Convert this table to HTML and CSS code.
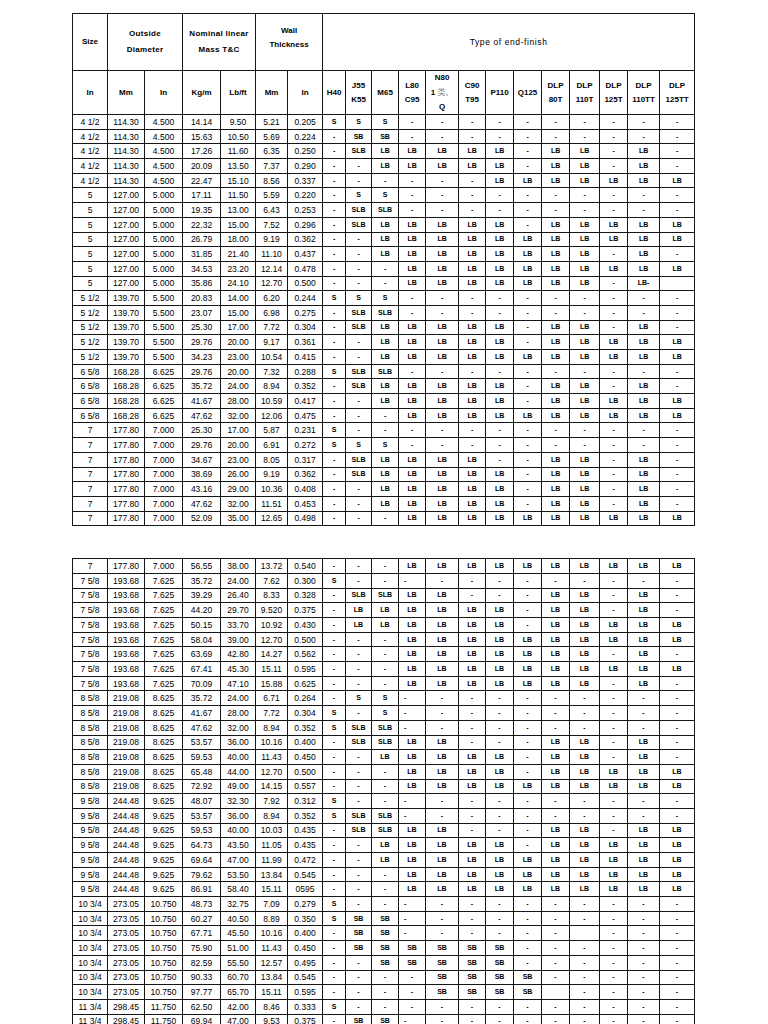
FILE: index.html
```html
<!DOCTYPE html>
<html>
<head>
<meta charset="utf-8">
<link rel="stylesheet" href="styles.css">
</head>
<body>
<div class="page">
<table class="spec">
<colgroup><col class="c35"><col class="c37"><col class="c38"><col class="c38"><col class="c35"><col class="c32"><col class="c35"><col class="c23"><col class="c26"><col class="c27"><col class="c27"><col class="c33"><col class="c27"><col class="c28"><col class="c28"><col class="c28"><col class="c30"><col class="c28"><col class="c32"><col class="c35"></colgroup>
<thead>
<tr class="h1"><th>Size</th><th colspan="2" class="sp">Outside<br>Diameter</th><th colspan="2" class="sp">Nominal linear<br>Mass T&amp;C</th><th colspan="2" class="wall">Wall<br>Thickness</th><th colspan="13" class="type">Type of end-finish</th></tr>
<tr class="h2"><th>In</th><th>Mm</th><th>In</th><th>Kg/m</th><th>Lb/ft</th><th>Mm</th><th>In</th><th>H40</th><th>J55<br>K55</th><th>M65</th><th>L80<br>C95</th><th>N80<br>1 <span class="cjk">类、</span><br>Q</th><th>C90<br>T95</th><th>P110</th><th>Q125</th><th>DLP<br>80T</th><th>DLP<br>110T</th><th>DLP<br>125T</th><th>DLP<br>110TT</th><th>DLP<br>125TT</th></tr>
</thead>
<tbody>
<tr><td>4 1/2</td><td>114.30</td><td>4.500</td><td>14.14</td><td>9.50</td><td>5.21</td><td>0.205</td><td>S</td><td>S</td><td>S</td><td>-</td><td>-</td><td>-</td><td>-</td><td>-</td><td>-</td><td>-</td><td>-</td><td>-</td><td>-</td></tr>
<tr><td>4 1/2</td><td>114.30</td><td>4.500</td><td>15.63</td><td>10.50</td><td>5.69</td><td>0.224</td><td>-</td><td>SB</td><td>SB</td><td>-</td><td>-</td><td>-</td><td>-</td><td>-</td><td>-</td><td>-</td><td>-</td><td>-</td><td>-</td></tr>
<tr><td>4 1/2</td><td>114.30</td><td>4.500</td><td>17.26</td><td>11.60</td><td>6.35</td><td>0.250</td><td>-</td><td>SLB</td><td>LB</td><td>LB</td><td>LB</td><td>LB</td><td>LB</td><td>-</td><td>LB</td><td>LB</td><td>-</td><td>LB</td><td>-</td></tr>
<tr><td>4 1/2</td><td>114.30</td><td>4.500</td><td>20.09</td><td>13.50</td><td>7.37</td><td>0.290</td><td>-</td><td>-</td><td>LB</td><td>LB</td><td>LB</td><td>LB</td><td>LB</td><td>-</td><td>LB</td><td>LB</td><td>-</td><td>LB</td><td>-</td></tr>
<tr><td>4 1/2</td><td>114.30</td><td>4.500</td><td>22.47</td><td>15.10</td><td>8.56</td><td>0.337</td><td>-</td><td>-</td><td>-</td><td>-</td><td>-</td><td>-</td><td>LB</td><td>LB</td><td>LB</td><td>LB</td><td>LB</td><td>LB</td><td>LB</td></tr>
<tr><td>5</td><td>127.00</td><td>5.000</td><td>17.11</td><td>11.50</td><td>5.59</td><td>0.220</td><td>-</td><td>S</td><td>S</td><td>-</td><td>-</td><td>-</td><td>-</td><td>-</td><td>-</td><td>-</td><td>-</td><td>-</td><td>-</td></tr>
<tr><td>5</td><td>127.00</td><td>5.000</td><td>19.35</td><td>13.00</td><td>6.43</td><td>0.253</td><td>-</td><td>SLB</td><td>SLB</td><td>-</td><td>-</td><td>-</td><td>-</td><td>-</td><td>-</td><td>-</td><td>-</td><td>-</td><td>-</td></tr>
<tr><td>5</td><td>127.00</td><td>5.000</td><td>22.32</td><td>15.00</td><td>7.52</td><td>0.296</td><td>-</td><td>SLB</td><td>LB</td><td>LB</td><td>LB</td><td>LB</td><td>LB</td><td>-</td><td>LB</td><td>LB</td><td>LB</td><td>LB</td><td>LB</td></tr>
<tr><td>5</td><td>127.00</td><td>5.000</td><td>26.79</td><td>18.00</td><td>9.19</td><td>0.362</td><td>-</td><td>-</td><td>LB</td><td>LB</td><td>LB</td><td>LB</td><td>LB</td><td>LB</td><td>LB</td><td>LB</td><td>LB</td><td>LB</td><td>LB</td></tr>
<tr><td>5</td><td>127.00</td><td>5.000</td><td>31.85</td><td>21.40</td><td>11.10</td><td>0.437</td><td>-</td><td>-</td><td>LB</td><td>LB</td><td>LB</td><td>LB</td><td>LB</td><td>LB</td><td>LB</td><td>LB</td><td>-</td><td>LB</td><td>-</td></tr>
<tr><td>5</td><td>127.00</td><td>5.000</td><td>34.53</td><td>23.20</td><td>12.14</td><td>0.478</td><td>-</td><td>-</td><td>-</td><td>LB</td><td>LB</td><td>LB</td><td>LB</td><td>LB</td><td>LB</td><td>LB</td><td>LB</td><td>LB</td><td>LB</td></tr>
<tr><td>5</td><td>127.00</td><td>5.000</td><td>35.86</td><td>24.10</td><td>12.70</td><td>0.500</td><td>-</td><td>-</td><td>-</td><td>LB</td><td>LB</td><td>LB</td><td>LB</td><td>LB</td><td>LB</td><td>LB</td><td>-</td><td>LB-</td><td></td></tr>
<tr><td>5 1/2</td><td>139.70</td><td>5.500</td><td>20.83</td><td>14.00</td><td>6.20</td><td>0.244</td><td>S</td><td>S</td><td>S</td><td>-</td><td>-</td><td>-</td><td>-</td><td>-</td><td>-</td><td>-</td><td>-</td><td>-</td><td>-</td></tr>
<tr><td>5 1/2</td><td>139.70</td><td>5.500</td><td>23.07</td><td>15.00</td><td>6.98</td><td>0.275</td><td>-</td><td>SLB</td><td>SLB</td><td>-</td><td>-</td><td>-</td><td>-</td><td>-</td><td>-</td><td>-</td><td>-</td><td>-</td><td>-</td></tr>
<tr><td>5 1/2</td><td>139.70</td><td>5.500</td><td>25.30</td><td>17.00</td><td>7.72</td><td>0.304</td><td>-</td><td>SLB</td><td>LB</td><td>LB</td><td>LB</td><td>LB</td><td>LB</td><td>-</td><td>LB</td><td>LB</td><td>-</td><td>LB</td><td>-</td></tr>
<tr><td>5 1/2</td><td>139.70</td><td>5.500</td><td>29.76</td><td>20.00</td><td>9.17</td><td>0.361</td><td>-</td><td>-</td><td>LB</td><td>LB</td><td>LB</td><td>LB</td><td>LB</td><td>-</td><td>LB</td><td>LB</td><td>LB</td><td>LB</td><td>LB</td></tr>
<tr><td>5 1/2</td><td>139.70</td><td>5.500</td><td>34.23</td><td>23.00</td><td>10.54</td><td>0.415</td><td>-</td><td>-</td><td>LB</td><td>LB</td><td>LB</td><td>LB</td><td>LB</td><td>LB</td><td>LB</td><td>LB</td><td>LB</td><td>LB</td><td>LB</td></tr>
<tr><td>6 5/8</td><td>168.28</td><td>6.625</td><td>29.76</td><td>20.00</td><td>7.32</td><td>0.288</td><td>S</td><td>SLB</td><td>SLB</td><td>-</td><td>-</td><td>-</td><td>-</td><td>-</td><td>-</td><td>-</td><td>-</td><td>-</td><td>-</td></tr>
<tr><td>6 5/8</td><td>168.28</td><td>6.625</td><td>35.72</td><td>24.00</td><td>8.94</td><td>0.352</td><td>-</td><td>SLB</td><td>LB</td><td>LB</td><td>LB</td><td>LB</td><td>LB</td><td>-</td><td>LB</td><td>LB</td><td>-</td><td>LB</td><td>-</td></tr>
<tr><td>6 5/8</td><td>168.28</td><td>6.625</td><td>41.67</td><td>28.00</td><td>10.59</td><td>0.417</td><td>-</td><td>-</td><td>LB</td><td>LB</td><td>LB</td><td>LB</td><td>LB</td><td>-</td><td>LB</td><td>LB</td><td>LB</td><td>LB</td><td>LB</td></tr>
<tr><td>6 5/8</td><td>168.28</td><td>6.625</td><td>47.62</td><td>32.00</td><td>12.06</td><td>0.475</td><td>-</td><td>-</td><td>-</td><td>LB</td><td>LB</td><td>LB</td><td>LB</td><td>LB</td><td>LB</td><td>LB</td><td>LB</td><td>LB</td><td>LB</td></tr>
<tr><td>7</td><td>177.80</td><td>7.000</td><td>25.30</td><td>17.00</td><td>5.87</td><td>0.231</td><td>S</td><td>-</td><td>-</td><td>-</td><td>-</td><td>-</td><td>-</td><td>-</td><td>-</td><td>-</td><td>-</td><td>-</td><td>-</td></tr>
<tr><td>7</td><td>177.80</td><td>7.000</td><td>29.76</td><td>20.00</td><td>6.91</td><td>0.272</td><td>S</td><td>S</td><td>S</td><td>-</td><td>-</td><td>-</td><td>-</td><td>-</td><td>-</td><td>-</td><td>-</td><td>-</td><td>-</td></tr>
<tr><td>7</td><td>177.80</td><td>7.000</td><td>34.67</td><td>23.00</td><td>8.05</td><td>0.317</td><td>-</td><td>SLB</td><td>LB</td><td>LB</td><td>LB</td><td>LB</td><td>-</td><td>-</td><td>LB</td><td>LB</td><td>-</td><td>LB</td><td>-</td></tr>
<tr><td>7</td><td>177.80</td><td>7.000</td><td>38.69</td><td>26.00</td><td>9.19</td><td>0.362</td><td>-</td><td>SLB</td><td>LB</td><td>LB</td><td>LB</td><td>LB</td><td>LB</td><td>-</td><td>LB</td><td>LB</td><td>-</td><td>LB</td><td>-</td></tr>
<tr><td>7</td><td>177.80</td><td>7.000</td><td>43.16</td><td>29.00</td><td>10.36</td><td>0.408</td><td>-</td><td>-</td><td>LB</td><td>LB</td><td>LB</td><td>LB</td><td>LB</td><td>-</td><td>LB</td><td>LB</td><td>-</td><td>LB</td><td>-</td></tr>
<tr><td>7</td><td>177.80</td><td>7.000</td><td>47.62</td><td>32.00</td><td>11.51</td><td>0.453</td><td>-</td><td>-</td><td>LB</td><td>LB</td><td>LB</td><td>LB</td><td>LB</td><td>-</td><td>LB</td><td>LB</td><td>-</td><td>LB</td><td>-</td></tr>
<tr><td>7</td><td>177.80</td><td>7.000</td><td>52.09</td><td>35.00</td><td>12.65</td><td>0.498</td><td>-</td><td>-</td><td>-</td><td>LB</td><td>LB</td><td>LB</td><td>LB</td><td>LB</td><td>LB</td><td>LB</td><td>LB</td><td>LB</td><td>LB</td></tr>
</tbody>
</table>

<table class="spec second">
<colgroup><col class="c35"><col class="c37"><col class="c38"><col class="c38"><col class="c35"><col class="c32"><col class="c35"><col class="c23"><col class="c26"><col class="c27"><col class="c27"><col class="c33"><col class="c27"><col class="c28"><col class="c28"><col class="c28"><col class="c30"><col class="c28"><col class="c32"><col class="c35"></colgroup>
<tbody>
<tr><td>7</td><td>177.80</td><td>7.000</td><td>56.55</td><td>38.00</td><td>13.72</td><td>0.540</td><td>-</td><td>-</td><td>-</td><td>LB</td><td>LB</td><td>LB</td><td>LB</td><td>LB</td><td>LB</td><td>LB</td><td>LB</td><td>LB</td><td>LB</td></tr>
<tr><td>7 5/8</td><td>193.68</td><td>7.625</td><td>35.72</td><td>24.00</td><td>7.62</td><td>0.300</td><td>S</td><td>-</td><td>-</td><td class="l">-</td><td>-</td><td>-</td><td>-</td><td>-</td><td>-</td><td>-</td><td>-</td><td>-</td><td>-</td></tr>
<tr><td>7 5/8</td><td>193.68</td><td>7.625</td><td>39.29</td><td>26.40</td><td>8.33</td><td>0.328</td><td>-</td><td>SLB</td><td>SLB</td><td>LB</td><td>LB</td><td>-</td><td>-</td><td>-</td><td>LB</td><td>LB</td><td>-</td><td>LB</td><td>-</td></tr>
<tr><td>7 5/8</td><td>193.68</td><td>7.625</td><td>44.20</td><td>29.70</td><td>9.520</td><td>0.375</td><td>-</td><td>LB</td><td>LB</td><td>LB</td><td>LB</td><td>LB</td><td>LB</td><td>-</td><td>LB</td><td>LB</td><td>-</td><td>LB</td><td>-</td></tr>
<tr><td>7 5/8</td><td>193.68</td><td>7.625</td><td>50.15</td><td>33.70</td><td>10.92</td><td>0.430</td><td>-</td><td>LB</td><td>LB</td><td>LB</td><td>LB</td><td>LB</td><td>LB</td><td>-</td><td>LB</td><td>LB</td><td>LB</td><td>LB</td><td>LB</td></tr>
<tr><td>7 5/8</td><td>193.68</td><td>7.625</td><td>58.04</td><td>39.00</td><td>12.70</td><td>0.500</td><td>-</td><td>-</td><td>-</td><td>LB</td><td>LB</td><td>LB</td><td>LB</td><td>LB</td><td>LB</td><td>LB</td><td>LB</td><td>LB</td><td>LB</td></tr>
<tr><td>7 5/8</td><td>193.68</td><td>7.625</td><td>63.69</td><td>42.80</td><td>14.27</td><td>0.562</td><td>-</td><td>-</td><td>-</td><td>LB</td><td>LB</td><td>LB</td><td>LB</td><td>LB</td><td>LB</td><td>LB</td><td>-</td><td>LB</td><td>-</td></tr>
<tr><td>7 5/8</td><td>193.68</td><td>7.625</td><td>67.41</td><td>45.30</td><td>15.11</td><td>0.595</td><td>-</td><td>-</td><td>-</td><td>LB</td><td>LB</td><td>LB</td><td>LB</td><td>LB</td><td>LB</td><td>LB</td><td>LB</td><td>LB</td><td>LB</td></tr>
<tr><td>7 5/8</td><td>193.68</td><td>7.625</td><td>70.09</td><td>47.10</td><td>15.88</td><td>0.625</td><td>-</td><td>-</td><td>-</td><td>LB</td><td>LB</td><td>LB</td><td>LB</td><td>LB</td><td>LB</td><td>LB</td><td>-</td><td>LB</td><td>-</td></tr>
<tr><td>8 5/8</td><td>219.08</td><td>8.625</td><td>35.72</td><td>24.00</td><td>6.71</td><td>0.264</td><td>-</td><td>S</td><td>S</td><td class="l">-</td><td>-</td><td>-</td><td>-</td><td>-</td><td>-</td><td>-</td><td>-</td><td>-</td><td>-</td></tr>
<tr><td>8 5/8</td><td>219.08</td><td>8.625</td><td>41.67</td><td>28.00</td><td>7.72</td><td>0.304</td><td>S</td><td>-</td><td>S</td><td class="l">-</td><td>-</td><td>-</td><td>-</td><td>-</td><td>-</td><td>-</td><td>-</td><td>-</td><td>-</td></tr>
<tr><td>8 5/8</td><td>219.08</td><td>8.625</td><td>47.62</td><td>32.00</td><td>8.94</td><td>0.352</td><td>S</td><td>SLB</td><td>SLB</td><td class="l">-</td><td>-</td><td>-</td><td>-</td><td>-</td><td>-</td><td>-</td><td>-</td><td>-</td><td>-</td></tr>
<tr><td>8 5/8</td><td>219.08</td><td>8.625</td><td>53.57</td><td>36.00</td><td>10.16</td><td>0.400</td><td>-</td><td>SLB</td><td>SLB</td><td>LB</td><td>LB</td><td>-</td><td>-</td><td>-</td><td>LB</td><td>LB</td><td>-</td><td>LB</td><td>-</td></tr>
<tr><td>8 5/8</td><td>219.08</td><td>8.625</td><td>59.53</td><td>40.00</td><td>11.43</td><td>0.450</td><td>-</td><td>-</td><td>LB</td><td>LB</td><td>LB</td><td>LB</td><td>LB</td><td>-</td><td>LB</td><td>LB</td><td>-</td><td>LB</td><td>-</td></tr>
<tr><td>8 5/8</td><td>219.08</td><td>8.625</td><td>65.48</td><td>44.00</td><td>12.70</td><td>0.500</td><td>-</td><td>-</td><td>-</td><td>LB</td><td>LB</td><td>LB</td><td>LB</td><td>-</td><td>LB</td><td>LB</td><td>LB</td><td>LB</td><td>LB</td></tr>
<tr><td>8 5/8</td><td>219.08</td><td>8.625</td><td>72.92</td><td>49.00</td><td>14.15</td><td>0.557</td><td>-</td><td>-</td><td>-</td><td>LB</td><td>LB</td><td>LB</td><td>LB</td><td>LB</td><td>LB</td><td>LB</td><td>LB</td><td>LB</td><td>LB</td></tr>
<tr><td>9 5/8</td><td>244.48</td><td>9.625</td><td>48.07</td><td>32.30</td><td>7.92</td><td>0.312</td><td>S</td><td>-</td><td>-</td><td class="l">-</td><td>-</td><td>-</td><td>-</td><td>-</td><td>-</td><td>-</td><td>-</td><td>-</td><td>-</td></tr>
<tr><td>9 5/8</td><td>244.48</td><td>9.625</td><td>53.57</td><td>36.00</td><td>8.94</td><td>0.352</td><td>S</td><td>SLB</td><td>SLB</td><td class="l">-</td><td>-</td><td>-</td><td>-</td><td>-</td><td>-</td><td>-</td><td>-</td><td>-</td><td>-</td></tr>
<tr><td>9 5/8</td><td>244.48</td><td>9.625</td><td>59.53</td><td>40.00</td><td>10.03</td><td>0.435</td><td>-</td><td>SLB</td><td>SLB</td><td>LB</td><td>LB</td><td>-</td><td>-</td><td>-</td><td>LB</td><td>LB</td><td>-</td><td>LB</td><td>LB</td></tr>
<tr><td>9 5/8</td><td>244.48</td><td>9.625</td><td>64.73</td><td>43.50</td><td>11.05</td><td>0.435</td><td>-</td><td>-</td><td>LB</td><td>LB</td><td>LB</td><td>LB</td><td>LB</td><td>-</td><td>LB</td><td>LB</td><td>LB</td><td>LB</td><td>LB</td></tr>
<tr><td>9 5/8</td><td>244.48</td><td>9.625</td><td>69.64</td><td>47.00</td><td>11.99</td><td>0.472</td><td>-</td><td>-</td><td>LB</td><td>LB</td><td>LB</td><td>LB</td><td>LB</td><td>LB</td><td>LB</td><td>LB</td><td>LB</td><td>LB</td><td>LB</td></tr>
<tr><td>9 5/8</td><td>244.48</td><td>9.625</td><td>79.62</td><td>53.50</td><td>13.84</td><td>0.545</td><td>-</td><td>-</td><td>-</td><td>LB</td><td>LB</td><td>LB</td><td>LB</td><td>LB</td><td>LB</td><td>LB</td><td>LB</td><td>LB</td><td>LB</td></tr>
<tr><td>9 5/8</td><td>244.48</td><td>9.625</td><td>86.91</td><td>58.40</td><td>15.11</td><td>0595</td><td>-</td><td>-</td><td>-</td><td>LB</td><td>LB</td><td>LB</td><td>LB</td><td>LB</td><td>LB</td><td>LB</td><td>LB</td><td>LB</td><td>LB</td></tr>
<tr><td>10 3/4</td><td>273.05</td><td>10.750</td><td>48.73</td><td>32.75</td><td>7.09</td><td>0.279</td><td>S</td><td>-</td><td>-</td><td class="l">-</td><td>-</td><td>-</td><td>-</td><td>-</td><td>-</td><td>-</td><td>-</td><td>-</td><td>-</td></tr>
<tr><td>10 3/4</td><td>273.05</td><td>10.750</td><td>60.27</td><td>40.50</td><td>8.89</td><td>0.350</td><td>S</td><td>SB</td><td>SB</td><td class="l">-</td><td>-</td><td>-</td><td>-</td><td>-</td><td>-</td><td>-</td><td>-</td><td>-</td><td>-</td></tr>
<tr><td>10 3/4</td><td>273.05</td><td>10.750</td><td>67.71</td><td>45.50</td><td>10.16</td><td>0.400</td><td>-</td><td>SB</td><td>SB</td><td class="l">-</td><td>-</td><td>-</td><td>-</td><td>-</td><td>-</td><td></td><td>-</td><td>-</td><td>-</td></tr>
<tr><td>10 3/4</td><td>273.05</td><td>10.750</td><td>75.90</td><td>51.00</td><td>11.43</td><td>0.450</td><td>-</td><td>SB</td><td>SB</td><td>SB</td><td>SB</td><td>SB</td><td>SB</td><td>-</td><td>-</td><td>-</td><td>-</td><td>-</td><td>-</td></tr>
<tr><td>10 3/4</td><td>273.05</td><td>10.750</td><td>82.59</td><td>55.50</td><td>12.57</td><td>0.495</td><td>-</td><td>-</td><td>SB</td><td>SB</td><td>SB</td><td>SB</td><td>SB</td><td>-</td><td>-</td><td>-</td><td>-</td><td>-</td><td>-</td></tr>
<tr><td>10 3/4</td><td>273.05</td><td>10.750</td><td>90.33</td><td>60.70</td><td>13.84</td><td>0.545</td><td>-</td><td>-</td><td>-</td><td>-</td><td>SB</td><td>SB</td><td>SB</td><td>SB</td><td>-</td><td>-</td><td>-</td><td>-</td><td>-</td></tr>
<tr><td>10 3/4</td><td>273.05</td><td>10.750</td><td>97.77</td><td>65.70</td><td>15.11</td><td>0.595</td><td>-</td><td>-</td><td>-</td><td>-</td><td>SB</td><td>SB</td><td>SB</td><td>SB</td><td></td><td>-</td><td>-</td><td>-</td><td>-</td></tr>
<tr><td>11 3/4</td><td>298.45</td><td>11.750</td><td>62.50</td><td>42.00</td><td>8.46</td><td>0.333</td><td>S</td><td>-</td><td>-</td><td>-</td><td>-</td><td>-</td><td>-</td><td>-</td><td>-</td><td>-</td><td>-</td><td>-</td><td>-</td></tr>
<tr><td>11 3/4</td><td>298.45</td><td>11.750</td><td>69.94</td><td>47.00</td><td>9.53</td><td>0.375</td><td>-</td><td>SB</td><td>SB</td><td class="l">-</td><td>-</td><td>-</td><td>-</td><td>-</td><td>-</td><td>-</td><td>-</td><td>-</td><td>-</td></tr>
</tbody>
</table>
</div>
</body>
</html>
```

FILE: styles.css
```css
html, body {
  margin: 0;
  padding: 0;
  background: #ffffff;
}

body {
  font-family: "Liberation Sans", Arial, "Noto Sans CJK SC", sans-serif;
  color: #000000;
}

.page {
  padding: 13px 0 0 72px;
}

.spec {
  border-collapse: collapse;
  table-layout: fixed;
  width: 623px;
}

.spec td,
.spec th {
  border: 1px solid #161616;
  padding: 0;
  text-align: center;
  vertical-align: middle;
  white-space: nowrap;
  overflow: hidden;
}

.spec th {
  font-weight: bold;
  font-size: 8px;
  line-height: 14px;
}

.spec td {
  font-size: 8.5px;
  line-height: 10px;
}

.spec tbody tr {
  height: 14.7px;
}

.spec tbody td:nth-child(n+8) {
  font-weight: bold;
  font-size: 7px;
}

.h1 {
  height: 57px;
}

.h2 {
  height: 43px;
}

.h1 .sp {
  line-height: 16px;
  letter-spacing: 0.3px;
}

.h1 .wall {
  padding-bottom: 9px;
}

.h1 .type {
  font-weight: normal;
  font-size: 8.5px;
  letter-spacing: 0.6px;
}

.cjk {
  font-family: "Noto Sans CJK SC", sans-serif;
  font-weight: normal;
  color: #8a8a8a;
}

.spec td.l {
  text-align: left;
  padding-left: 5px;
}

.second {
  margin-top: 32px;
}

.c23 { width: 23px; }
.c26 { width: 26px; }
.c27 { width: 27px; }
.c28 { width: 28px; }
.c30 { width: 30px; }
.c32 { width: 32px; }
.c33 { width: 33px; }
.c35 { width: 35px; }
.c37 { width: 37px; }
.c38 { width: 38px; }
```
